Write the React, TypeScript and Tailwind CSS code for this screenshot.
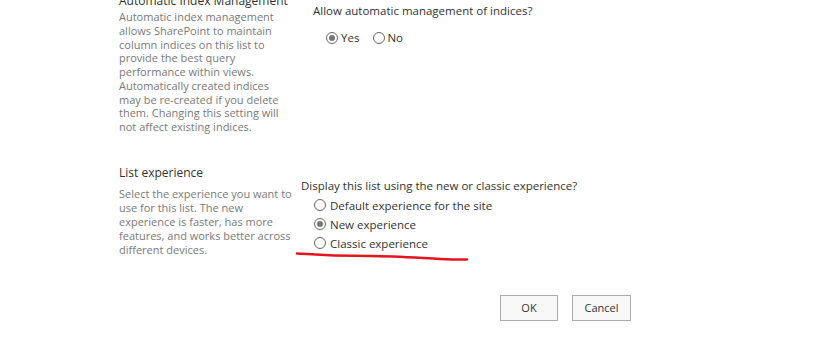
import React from "react";

function Radio({ checked }: { checked?: boolean }) {
  return (
    <span className="inline-flex h-[12px] w-[12px] shrink-0 items-center justify-center rounded-full border border-[#666] bg-white">
      {checked ? <span className="h-[6px] w-[6px] rounded-full bg-[#777]" /> : null}
    </span>
  );
}

const font = { fontFamily: '"Open Sans", "Noto Sans", sans-serif' };

export default function App() {
  const desc1 = [
    "Automatic index management",
    "allows SharePoint to maintain",
    "column indices on this list to",
    "provide the best query",
    "performance within views.",
    "Automatically created indices",
    "may be re-created if you delete",
    "them. Changing this setting will",
    "not affect existing indices.",
  ];
  const desc2 = [
    "Select the experience you want to",
    "use for this list. The new",
    "experience is faster, has more",
    "features, and works better across",
    "different devices.",
  ];
  return (
    <div className="relative h-[363px] w-[839px] overflow-hidden bg-white" style={font}>
      <div className="-mt-[8px] pl-[119px]">
        {/* Section 1 */}
        <div className="flex">
          <div className="w-[194px] shrink-0">
            <div className="whitespace-nowrap text-[12px] leading-[18px] text-[#333]">Automatic Index Management</div>
            <div className="text-[11px] leading-[13.75px] text-[#7a7a7a]">
              {desc1.map((l) => (
                <div key={l} className="whitespace-nowrap">{l}</div>
              ))}
            </div>
          </div>
          <div className="pt-[10px]">
            <div className="whitespace-nowrap text-[11.5px] leading-[18px] text-[#333]">Allow automatic management of indices?</div>
            <div className="mt-[9px] flex items-center pl-[13px] text-[11.5px] leading-[18px] text-[#333]">
              <Radio checked />
              <span className="ml-[3px]">Yes</span>
              <span className="ml-[14px] flex items-center">
                <Radio />
                <span className="ml-[2px]">No</span>
              </span>
            </div>
          </div>
        </div>

        {/* Section 2 */}
        <div className="mt-[30px] flex">
          <div className="w-[182px] shrink-0">
            <div className="whitespace-nowrap text-[12px] leading-[18px] text-[#333]">List experience</div>
            <div className="mt-[5px] text-[11px] leading-[14px] text-[#7a7a7a]">
              {desc2.map((l) => (
                <div key={l} className="whitespace-nowrap">{l}</div>
              ))}
            </div>
          </div>
          <div className="pt-[13px]">
            <div className="whitespace-nowrap text-[11.5px] leading-[18px] text-[#333]">Display this list using the new or classic experience?</div>
            <div className="mt-[1px] flex flex-col pl-[13px] text-[11.5px] leading-[19px] text-[#333]">
              <div className="flex items-center">
                <Radio />
                <span className="ml-[4px]">Default experience for the site</span>
              </div>
              <div className="flex items-center">
                <Radio checked />
                <span className="ml-[4px]">New experience</span>
              </div>
              <div className="flex items-center">
                <Radio />
                <span className="ml-[4px]">Classic experience</span>
              </div>
            </div>
          </div>
        </div>

        {/* Buttons */}
        <div className="mt-[38px] flex pl-[381px]">
          <button className="h-[26px] w-[58px] border border-[#ababab] bg-[#f8f8f8] text-[11px] text-[#333]">OK</button>
          <button className="ml-[14px] h-[26px] w-[59px] border border-[#ababab] bg-[#f8f8f8] text-[11px] text-[#333]">Cancel</button>
        </div>
      </div>

      {/* Red hand-drawn underline */}
      <svg className="absolute left-0 top-0" width="839" height="363" viewBox="0 0 839 363">
        <path
          d="M297 253.5 C 320 255, 345 256, 370 256 C 395 256, 420 258, 440 259 C 452 259.5, 460 259.5, 467 259.5"
          stroke="#e3151f"
          strokeWidth="2.6"
          fill="none"
          strokeLinecap="round"
        />
      </svg>
    </div>
  );
}
